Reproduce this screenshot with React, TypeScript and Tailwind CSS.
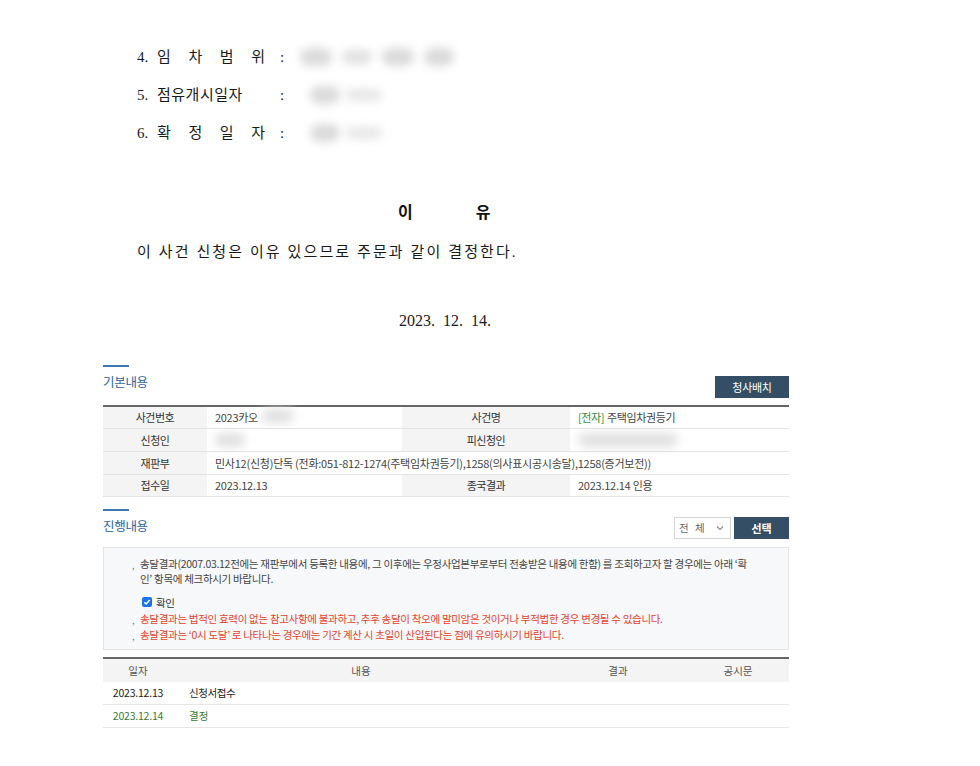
import React from "react";

const Blur = ({ w, h = 14, c = "#dadada" }: { w: number; h?: number; c?: string }) => (
  <span
    className="inline-block rounded-full blur-[5px]"
    style={{ width: w, height: h, background: c }}
  />
);

const SectionTitle = ({ title }: { title: string }) => (
  <div className="flex flex-col">
    <div className="h-[2px] w-[26px] bg-[#3f78b5]" />
    <div className="mt-[7px] text-[12.5px] leading-[16px] text-[#2c62a0] tracking-[-0.3px]">{title}</div>
  </div>
);

const Bullet = () => (
  <span className="inline-block w-[8px] shrink-0 text-[#777] text-[9px] leading-[15px] translate-y-[2px]">,</span>
);

export default function App() {
  const serif = "font-['Liberation_Serif','Noto_Sans_CJK_KR',serif]";
  return (
    <div className="w-[980px] h-[766px] bg-white overflow-hidden font-['Noto_Sans_CJK_KR','Liberation_Sans',sans-serif]">
      {/* document part */}
      <div className={`${serif} text-[15px] text-[#1a1a1a] pt-[38px] pl-[137px]`}>
        <div className="flex items-center h-[38px]">
          <span className="w-[20px]">4.</span>
          <span className="w-[108px] flex justify-between">
            <span>임</span><span>차</span><span>범</span><span>위</span>
          </span>
          <span className="ml-[15px] w-[20px]">:</span>
          <span className="flex gap-[10px] items-center">
            <Blur w={32} h={18} />
            <Blur w={30} h={14} c="#e0e0e0" />
            <Blur w={32} h={18} />
            <Blur w={30} h={18} />
          </span>
        </div>
        <div className="flex items-center h-[38px]">
          <span className="w-[20px]">5.</span>
          <span className="w-[108px] tracking-[0.5px]">점유개시일자</span>
          <span className="ml-[15px] w-[30px]">:</span>
          <span className="flex gap-[6px] items-center">
            <Blur w={30} h={18} />
            <Blur w={36} h={12} c="#e6e6e6" />
          </span>
        </div>
        <div className="flex items-center h-[38px]">
          <span className="w-[20px]">6.</span>
          <span className="w-[108px] flex justify-between">
            <span>확</span><span>정</span><span>일</span><span>자</span>
          </span>
          <span className="ml-[15px] w-[30px]">:</span>
          <span className="flex gap-[6px] items-center">
            <Blur w={30} h={18} />
            <Blur w={36} h={12} c="#e6e6e6" />
          </span>
        </div>

        <div className="mt-[47px] h-[24px] flex items-center pl-[261px] font-['Noto_Sans_CJK_KR',sans-serif] font-bold text-[16px] text-[#111]">
          <span>이</span>
          <span className="ml-[63px]">유</span>
        </div>

        <div className="mt-[17px] h-[24px] flex items-center tracking-[2.1px]">
          이 사건 신청은 이유 있으므로 주문과 같이 결정한다.
        </div>

        <div className="mt-[45px] h-[24px] flex items-center pl-[262px] text-[16px] [word-spacing:4px]">
          2023. 12. 14.
        </div>
      </div>

      {/* web part */}
      <div className="ml-[103px] w-[686px] mt-[32px]">
        <div className="flex justify-between items-start">
          <SectionTitle title="기본내용" />
          <button className="mt-[11px] h-[22px] w-[74px] bg-[#344e66] text-white text-[11px] tracking-[-0.3px]">
            청사배치
          </button>
        </div>

        <div className="mt-[7px] border-t-2 border-[#666] grid grid-cols-[104px_195px_168px_219px] text-[11px] tracking-[-0.25px] text-[#444]">
          {/* row 1 */}
          <div className="h-[22px] bg-[#f4f4f4] border-b border-[#e4e4e4] flex items-center justify-center text-[#333] tracking-[-0.5px]">사건번호</div>
          <div className="h-[22px] border-b border-[#e4e4e4] flex items-center pl-[8px]">
            <span className="tracking-[-0.3px]">2023카오</span>
            <span className="ml-[4px]"><Blur w={32} h={14} c="#e0e0e0" /></span>
          </div>
          <div className="h-[22px] bg-[#f4f4f4] border-b border-[#e4e4e4] flex items-center justify-center text-[#333] tracking-[-0.5px]">사건명</div>
          <div className="h-[22px] border-b border-[#e4e4e4] flex items-center pl-[8px] tracking-[-0.4px]">
            <span className="text-[#2e8b3a]">[전자]</span>
            <span className="ml-[3px]">주택임차권등기</span>
          </div>
          {/* row 2 */}
          <div className="h-[23px] bg-[#f4f4f4] border-b border-[#e4e4e4] flex items-center justify-center text-[#333] tracking-[-0.5px]">신청인</div>
          <div className="h-[23px] border-b border-[#e4e4e4] flex items-center pl-[8px]">
            <Blur w={30} h={14} c="#e0e0e0" />
          </div>
          <div className="h-[23px] bg-[#f4f4f4] border-b border-[#e4e4e4] flex items-center justify-center text-[#333] tracking-[-0.5px]">피신청인</div>
          <div className="h-[23px] border-b border-[#e4e4e4] flex items-center pl-[8px]">
            <Blur w={100} h={14} c="#e0e0e0" />
          </div>
          {/* row 3 */}
          <div className="h-[23px] bg-[#f4f4f4] border-b border-[#e4e4e4] flex items-center justify-center text-[#333] tracking-[-0.5px]">재판부</div>
          <div className="col-span-3 h-[23px] border-b border-[#e4e4e4] flex items-center pl-[8px] whitespace-nowrap">
            민사12(신청)단독 (전화:051-812-1274(주택임차권등기),1258(의사표시공시송달),1258(증거보전))
          </div>
          {/* row 4 */}
          <div className="h-[22px] bg-[#f4f4f4] border-b border-[#e4e4e4] flex items-center justify-center text-[#333] tracking-[-0.5px]">접수일</div>
          <div className="h-[22px] border-b border-[#e4e4e4] flex items-center pl-[8px]">2023.12.13</div>
          <div className="h-[22px] bg-[#f4f4f4] border-b border-[#e4e4e4] flex items-center justify-center text-[#333] tracking-[-0.5px]">종국결과</div>
          <div className="h-[22px] border-b border-[#e4e4e4] flex items-center pl-[8px]">2023.12.14 인용</div>
        </div>

        <div className="mt-[12px] flex justify-between items-start">
          <SectionTitle title="진행내용" />
          <div className="mt-[8px] flex gap-[3px]">
            <div className="h-[22px] w-[57px] border border-[#d4d4d4] bg-white flex items-center justify-between px-[4px] text-[10.5px] text-[#666]">
              <span className="tracking-[2px]">전 체</span>
              <svg width="8" height="6" viewBox="0 0 8 6" className="mr-[2px]">
                <path d="M1 1.5 L4 4.5 L7 1.5" fill="none" stroke="#888" strokeWidth="1.1" />
              </svg>
            </div>
            <button className="h-[22px] w-[55px] bg-[#344e66] text-white text-[11px] font-bold">선택</button>
          </div>
        </div>

        <div className="mt-[8px] h-[103px] border border-[#e3e3e3] bg-[#f7f8fa] pl-[28px] pt-[8px] text-[10.5px] tracking-[-0.3px] text-[#444] leading-[15px]">
          <div className="flex">
            <Bullet />
            <div>
              <div className="whitespace-nowrap">송달결과(2007.03.12전에는 재판부에서 등록한 내용에, 그 이후에는 우정사업본부로부터 전송받은 내용에 한함) 를 조회하고자 할 경우에는 아래 ‘확</div>
              <div>인’ 항목에 체크하시기 바랍니다.</div>
            </div>
          </div>
          <div className="mt-[9px] pl-[10px] flex items-center h-[14px]">
            <span className="w-[10px] h-[10px] rounded-[2px] bg-[#1a73e8] flex items-center justify-center">
              <svg width="8" height="8" viewBox="0 0 8 8">
                <path d="M1.3 4.2 L3.2 6 L6.7 2" fill="none" stroke="white" strokeWidth="1.5" />
              </svg>
            </span>
            <span className="ml-[4px] text-[10.5px] text-[#333]">확인</span>
          </div>
          <div className="mt-[2px] flex text-[#e8412c]">
            <Bullet />
            <div className="whitespace-nowrap">송달결과는 법적인 효력이 없는 참고사항에 불과하고, 추후 송달이 착오에 말미암은 것이거나 부적법한 경우 변경될 수 있습니다.</div>
          </div>
          <div className="mt-[1px] flex text-[#e8412c]">
            <Bullet />
            <div className="whitespace-nowrap">송달결과는 ‘0시 도달’ 로 나타나는 경우에는 기간 계산 시 초일이 산입된다는 점에 유의하시기 바랍니다.</div>
          </div>
        </div>

        <div className="mt-[7px] border-t-2 border-[#666] grid grid-cols-[70px_376px_138px_102px] text-[10.5px]">
          <div className="h-[23px] bg-[#f4f4f4] flex items-center justify-center text-[#555]">일자</div>
          <div className="h-[23px] bg-[#f4f4f4] flex items-center justify-center text-[#555]">내용</div>
          <div className="h-[23px] bg-[#f4f4f4] flex items-center justify-center text-[#555]">결과</div>
          <div className="h-[23px] bg-[#f4f4f4] flex items-center justify-center text-[#555]">공시문</div>

          <div className="h-[23px] border-b border-[#e6e6e6] flex items-center justify-center text-[#222] tracking-[-0.2px]">2023.12.13</div>
          <div className="h-[23px] border-b border-[#e6e6e6] flex items-center pl-[16px] text-[#222] tracking-[-0.4px]">신청서접수</div>
          <div className="h-[23px] border-b border-[#e6e6e6]" />
          <div className="h-[23px] border-b border-[#e6e6e6]" />

          <div className="h-[23px] border-b border-[#e6e6e6] flex items-center justify-center text-[#3b7a3b] tracking-[-0.2px]">2023.12.14</div>
          <div className="h-[23px] border-b border-[#e6e6e6] flex items-center pl-[16px] text-[#3b7a3b]">결정</div>
          <div className="h-[23px] border-b border-[#e6e6e6]" />
          <div className="h-[23px] border-b border-[#e6e6e6]" />
        </div>
      </div>
    </div>
  );
}
